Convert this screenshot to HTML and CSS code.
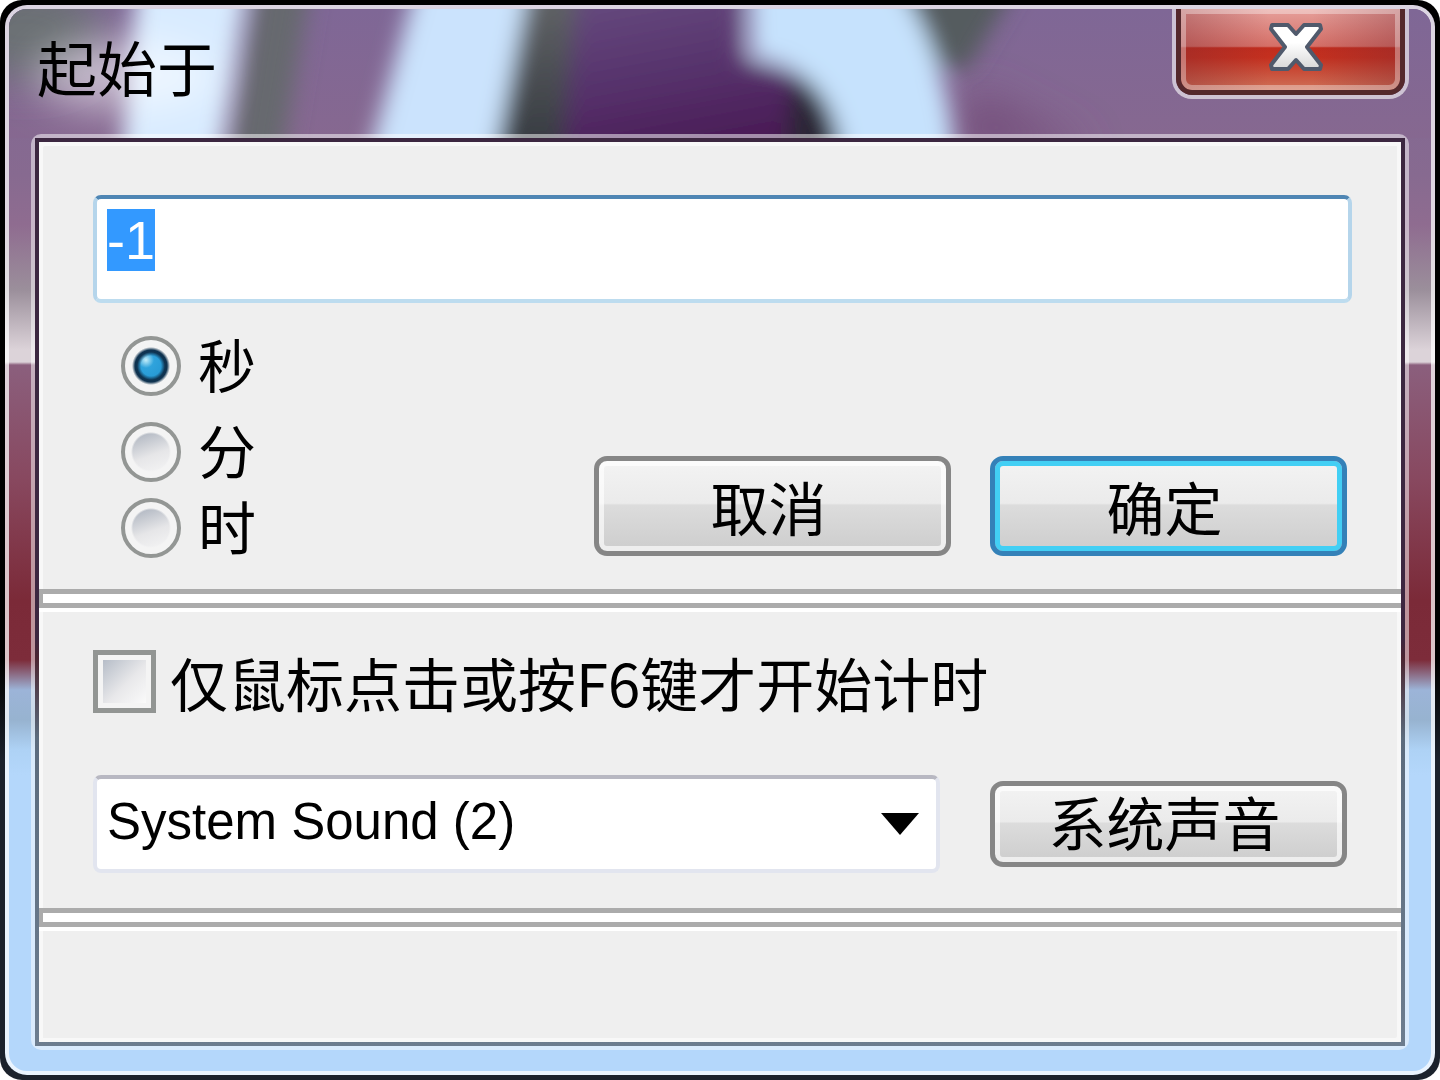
FILE: index.html
```html
<!DOCTYPE html>
<html lang="zh-CN">
<head>
<meta charset="utf-8">
<title>起始于</title>
<link rel="stylesheet" href="styles.css">
</head>
<body>
<main class="window">
  <div class="frame">
    <header class="titlebar">
      <svg class="glass" viewBox="9 9 1422 129" preserveAspectRatio="none" aria-hidden="true">
        <defs>
          <filter id="soft" x="-20%" y="-50%" width="140%" height="200%"><feGaussianBlur stdDeviation="11"/></filter>
          <filter id="softer" x="-50%" y="-50%" width="200%" height="200%"><feGaussianBlur stdDeviation="20"/></filter>
          <linearGradient id="violet" x1="0" y1="0" x2="0" y2="1">
            <stop offset="0" stop-color="#7f6796"/><stop offset="1" stop-color="#866890"/>
          </linearGradient>
          <linearGradient id="plum" x1="0" y1="0" x2="0.3" y2="1">
            <stop offset="0" stop-color="#6a5184"/><stop offset="0.6" stop-color="#55306a"/><stop offset="1" stop-color="#481852"/>
          </linearGradient>
          <linearGradient id="band" x1="0" y1="0" x2="0" y2="1">
            <stop offset="0" stop-color="#66686b"/><stop offset="1" stop-color="#2f343a"/>
          </linearGradient>
        </defs>
        <rect x="9" y="9" width="1422" height="129" fill="url(#violet)"/>
        <g filter="url(#softer)">
          <ellipse cx="26" cy="30" rx="76" ry="50" fill="#6b7073"/>
          <path d="M950 150 L975 90 L1090 150Z" fill="#75507c"/>
        </g>
        <g filter="url(#soft)">
          <path d="M138 -20 L120 170 L218 170 L248 -20Z" fill="#d8ebff"/>
          <path d="M258 -20 L228 170 L280 170 L312 -20Z" fill="#66696e"/>
          <path d="M418 -20 L365 170 L495 170 L532 -20Z" fill="#cbe3fd"/>
          <path d="M564 -20 L550 170 L860 170 L830 80 L738 60 L740 -20Z" fill="url(#plum)"/>
          <path d="M530 -20 L492 170 L560 170 L578 -20Z" fill="url(#band)"/>
          <path d="M785 170 L792 80 L850 70 L850 170Z" fill="#2c2734"/>
          <path d="M880 -20 L1020 -20 L968 68 L940 68Z" fill="#555b5e"/>
          <path d="M750 -20 L895 -20 Q950 55 955 170 L842 170 Q840 70 752 58Z" fill="#c6e2fd"/>
        </g>
        <g filter="url(#softer)">
          <ellipse cx="125" cy="75" rx="90" ry="34" fill="#ffffff" fill-opacity=".55"/>
        </g>
      </svg>
      <h1 class="title">起始于</h1>
      <button class="close" type="button" aria-label="关闭">
        <svg class="close-icon" viewBox="0 0 56 48" aria-hidden="true">
          <defs>
            <linearGradient id="steel" x1="0" y1="0" x2="0" y2="1">
              <stop offset="0.4" stop-color="#ffffff"/><stop offset="1" stop-color="#d8d8d8"/>
            </linearGradient>
          </defs>
          <path d="M4 2 H20 L28 11 L36 2 H52 L53 6 L39 24 L53 42 L52 46 H36 L28 37 L20 46 H4 L3 42 L17 24 L3 6Z" fill="url(#steel)" stroke="#505a6c" stroke-width="4" stroke-linejoin="round"/>
        </svg>
      </button>
    </header>
    <form class="client">
      <section class="panel time">
        <input class="amount" type="text" value="-1" aria-label="起始于" autofocus>
        <div class="row">
          <div class="units">
            <label class="unit"><input class="radio" type="radio" name="unit" checked><span class="unit-name">秒</span></label>
            <label class="unit"><input class="radio" type="radio" name="unit"><span class="unit-name">分</span></label>
            <label class="unit"><input class="radio" type="radio" name="unit"><span class="unit-name">时</span></label>
          </div>
          <div class="actions">
            <button class="button" type="button">取消</button>
            <button class="button primary" type="submit">确定</button>
          </div>
        </div>
      </section>
      <hr class="divider">
      <section class="panel sound">
        <label class="trigger"><input class="checkbox" type="checkbox">仅鼠标点击或按F6键才开始计时</label>
        <div class="sound-row">
          <div class="combo">
            <select class="select" aria-label="声音"><option>System Sound (2)</option></select>
          </div>
          <button class="button short" type="button">系统声音</button>
        </div>
      </section>
      <hr class="divider">
    </form>
  </div>
</main>
<script src="script.js"></script>
</body>
</html>
```
FILE: styles.css
```css
* { box-sizing: border-box; }

body {
  margin: 0;
  background: #fff;
  color: #000;
  font-family: "Noto Sans CJK SC", sans-serif;
  font-size: 58px;
  line-height: 64px;
}

button, input, select { font: inherit; color: inherit; margin: 0; }

.window {
  display: flex;
  min-height: 100vh;
  padding: 5px;
  border-radius: 22px;
  background: linear-gradient(#000 0 660px, #1b222c 760px);
}

.frame {
  flex: 1;
  display: flex;
  flex-direction: column;
  overflow: hidden;
  border: 4px solid rgba(255, 255, 255, .72);
  border-radius: 22px;
  background: linear-gradient(
    #7f6796 0, #876a90 170px, #8f6c90 220px, #9b8f9b 285px, #dcd3d9 345px, #dcd3d9 357px,
    #8b5f7d 360px, #88485f 475px, #7b2a38 595px, #7d2c3a 655px, #9cb4d8 685px,
    #97b3d0 715px, #aed2f5 745px, #b4d7fb 770px) border-box;
}

.titlebar {
  display: grid;
  grid-template: 129px / 1fr auto;
}

.glass {
  grid-area: 1 / 1 / 2 / 3;
  width: 100%;
  height: 100%;
}

.title {
  grid-area: 1 / 1;
  z-index: 1;
  margin: 0;
  padding: 25px 28px;
  font-size: 60px;
  font-weight: 400;
}

.close {
  grid-area: 1 / 2;
  z-index: 1;
  display: flex;
  align-items: center;
  justify-content: center;
  width: 229px;
  height: 86px;
  margin-right: 26px;
  padding: 0 0 5px 10px;
  border: 5px solid #54282c;
  border-top: 0;
  border-radius: 0 0 16px 16px;
  box-shadow: 0 0 0 4px rgba(255, 255, 255, .6), inset 0 0 0 5px rgba(255, 255, 255, .35);
  background:
    linear-gradient(90deg, rgba(120, 40, 50, .35), transparent 40% 60%, rgba(120, 40, 50, .35)),
    linear-gradient(#e6a09b, #d56f67 46%, #c12d1e 48%, #c4301f 60%, #cf7259);
}

.close-icon { width: 56px; height: 48px; }

.client {
  flex: 1;
  margin: 0 26px 25px;
  border: 4px solid;
  border-image: linear-gradient(#3c2740 0 500px, #4c2631 520px, #5b6b7d 600px, #6d7d8f) 4;
  box-shadow: 0 0 0 4px rgba(255, 255, 255, .5), inset 4px 4px #f8f8f8, inset -4px -4px #f8f8f8;
  border-radius: 6px;
  background: #efefef;
}

.panel { padding-left: 54px; padding-right: 49px; }
.time { padding-top: 53px; padding-bottom: 33px; }
.sound { padding-top: 38px; padding-bottom: 35px; }

.amount {
  display: block;
  width: 100%;
  height: 108px;
  padding: 10px 10px 28px;
  border: 4px solid #b5d5eb;
  border-top-color: #4f86b4;
  border-bottom-color: #bddcef;
  border-radius: 8px;
  outline: 0;
  background: #fff;
  font-family: "Liberation Sans", sans-serif;
  font-size: 54px;
  line-height: 62px;
  caret-color: transparent;
}
.amount::selection { background: #3399ff; color: #fff; }

.row {
  display: flex;
  justify-content: space-between;
  align-items: flex-end;
  margin-top: 25px;
}

.units {
  display: grid;
  grid-template-rows: 76px 96px 56px;
  padding-left: 28px;
}

.unit, .trigger { display: flex; align-items: center; }
.unit { gap: 17px; }
.unit-name { padding-bottom: 6px; }

.radio {
  appearance: none;
  width: 60px;
  height: 60px;
  border: 4px solid #939694;
  border-radius: 50%;
  background:
    radial-gradient(circle, transparent 18px, #f4f4f4 20px),
    linear-gradient(160deg, #b4bac4 20%, #e6e6e8 55%, #fafafa);
}
.radio:checked {
  background:
    radial-gradient(circle, transparent 10px, #0f3350 14px 16px, #f4f4f4 19px),
    radial-gradient(circle at 21px 20px, #c4eefa 0, #2fa3dc 8px, #1484c4);
}

.actions {
  display: flex;
  gap: 39px;
  padding-right: 5px;
}

.button {
  width: 357px;
  height: 100px;
  padding: 0 8px 0 0;
  border: 5px solid #868686;
  border-radius: 13px;
  box-shadow: inset 0 0 0 5px rgba(255, 255, 255, .65);
  background: linear-gradient(#f3f3f3, #ebebeb 47%, #dcdcdc 49%, #cdcdcd);
}

.primary {
  border-color: #3481b8;
  box-shadow: inset 0 0 0 5px #42cff4;
}

.divider {
  height: 23px;
  margin: 0;
  border: 5px solid #ababab;
  border-width: 5px 0 0;
  background:
    linear-gradient(#ababab, #ababab) 0 0 / 4px 9px no-repeat,
    linear-gradient(#fff 0 9px, #ababab 9px 14px, #fff 14px);
}

.trigger { gap: 14px; height: 63px; }

.checkbox {
  appearance: none;
  width: 63px;
  height: 63px;
  border: 5px solid #929593;
  background: linear-gradient(135deg, #b6bdc8, #e8e8ea 55%, #fafafa) content-box, #f4f4f4;
  padding: 5px;
}

.sound-row {
  display: flex;
  align-items: center;
  gap: 50px;
  margin-top: 62px;
  padding-right: 5px;
}

.combo {
  flex: 1;
  display: grid;
  align-items: center;
}

.select {
  grid-area: 1 / 1;
  appearance: none;
  width: 100%;
  height: 98px;
  padding: 0 80px 4px 10px;
  border: 4px solid #e2e5ef;
  border-top-color: #b8b8c2;
  border-radius: 8px;
  background: #fff;
  font-family: "Liberation Sans", sans-serif;
  font-size: 51px;
}

.combo::after {
  content: "";
  grid-area: 1 / 1;
  justify-self: end;
  width: 38px;
  height: 22px;
  margin-right: 21px;
  background: #000;
  clip-path: polygon(0 0, 100% 0, 50% 100%);
  pointer-events: none;
}

.short {
  height: 86px;
  padding-bottom: 6px;
}
```
FILE: script.js
```js
const amount = document.querySelector('.amount');
amount.focus();
amount.select();
```
